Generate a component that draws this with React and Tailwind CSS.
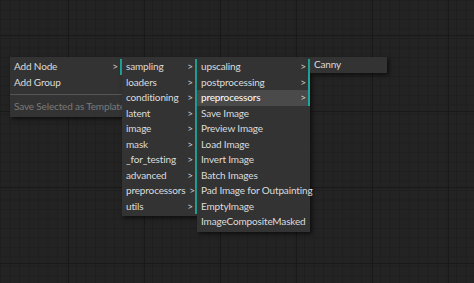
import React from 'react';

const teal = 'border-r-2 border-[#1fa59b]';

const Entry = ({ label, sub, active, disabled }) => (
  <div
    className={`flex h-[15.5px] items-center justify-between pl-[4px] pr-[2px] ${sub ? teal : 'border-r-2 border-transparent'} ${
      active ? 'bg-[#4a4a4a] text-white' : ''
    } ${disabled ? 'text-[#7a7a7a]' : 'text-[#dcdcdc]'}`}
  >
    <span className="whitespace-nowrap">{label}</span>
    {sub && <span className="ml-1 text-[10px] text-[#cfcfcf]">&gt;</span>}
  </div>
);

const Menu = ({ items, className = '' }) => (
  <div className={`flex flex-col bg-[#333333] py-[2px] shadow-[2px_2px_4px_rgba(0,0,0,0.6)] ${className}`}>
    {items.map((it, i) =>
      it === '-' ? (
        <div key={i} className="my-[4px] h-px bg-[#555]" />
      ) : (
        <Entry key={i} {...it} />
      )
    )}
  </div>
);

export default function App() {
  const root = [
    { label: 'Add Node', sub: true },
    { label: 'Add Group' },
    '-',
    { label: 'Save Selected as Template', disabled: true },
  ];
  const cats = ['sampling', 'loaders', 'conditioning', 'latent', 'image', 'mask', '_for_testing', 'advanced', 'preprocessors', 'utils'].map(
    (l) => ({ label: l, sub: true })
  );
  const image = [
    { label: 'upscaling', sub: true },
    { label: 'postprocessing', sub: true },
    { label: 'preprocessors', sub: true, active: true },
    { label: 'Save Image' },
    { label: 'Preview Image' },
    { label: 'Load Image' },
    { label: 'Invert Image' },
    { label: 'Batch Images' },
    { label: 'Pad Image for Outpainting' },
    { label: 'EmptyImage' },
    { label: 'ImageCompositeMasked' },
  ];

  return (
    <div
      className="h-[283px] w-[474px] overflow-hidden bg-[#232323] bg-[linear-gradient(#191919_1px,transparent_1px),linear-gradient(90deg,#191919_1px,transparent_1px),linear-gradient(#1f1f1f_1px,transparent_1px),linear-gradient(90deg,#1f1f1f_1px,transparent_1px)] bg-[size:76px_76px,76px_76px,9.5px_9.5px,9.5px_9.5px] bg-[position:68px_35px,68px_35px,0_0,0_0] font-['Lato',sans-serif] text-[10px] tracking-[-0.15px]"
    >
      <div className="flex items-start pl-[10px] pt-[57px]">
        <Menu items={root} className="w-[112px] bg-[#2c2c2c]" />
        <Menu items={cats} className="w-[75px]" />
        <Menu items={image} className="w-[113px]" />
        <Menu items={[{ label: 'Canny' }]} className="w-[77px] !py-0" />
      </div>
    </div>
  );
}
